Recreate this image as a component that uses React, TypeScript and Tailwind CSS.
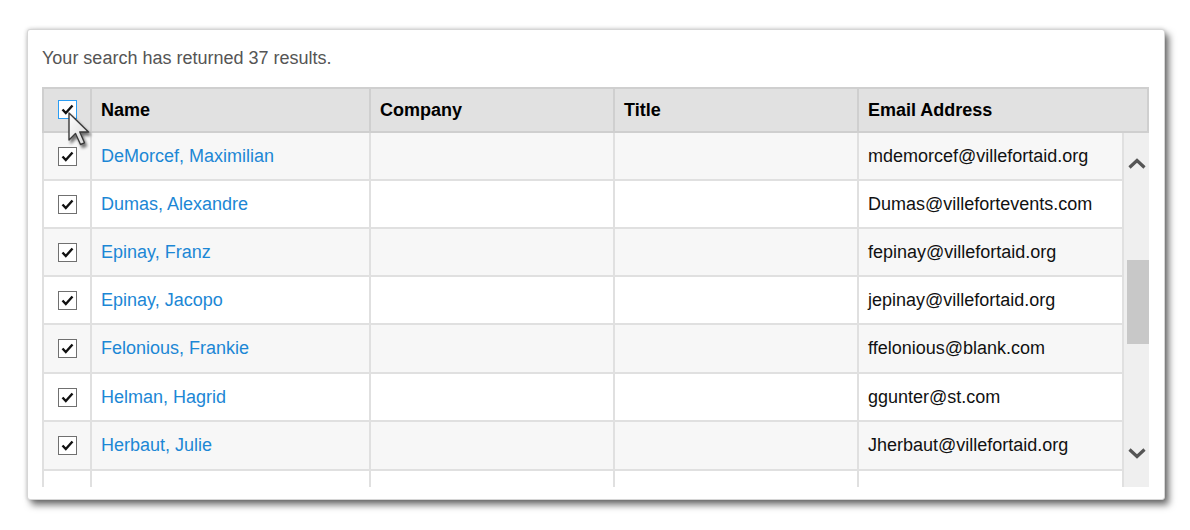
import React from "react";

type Person = { name: string; email: string };

const people: Person[] = [
  { name: "DeMorcef, Maximilian", email: "mdemorcef@villefortaid.org" },
  { name: "Dumas, Alexandre", email: "Dumas@villefortevents.com" },
  { name: "Epinay, Franz", email: "fepinay@villefortaid.org" },
  { name: "Epinay, Jacopo", email: "jepinay@villefortaid.org" },
  { name: "Felonious, Frankie", email: "ffelonious@blank.com" },
  { name: "Helman, Hagrid", email: "ggunter@st.com" },
  { name: "Herbaut, Julie", email: "Jherbaut@villefortaid.org" },
];

function Checkbox({ focused = false }: { focused?: boolean }) {
  return (
    <span
      className={`flex h-[19px] w-[19px] items-center justify-center bg-white border ${
        focused ? "border-[#2a9df4]" : "border-[#707070]"
      }`}
    >
      <svg width="13" height="11" viewBox="0 0 13 11">
        <path d="M1.5 5.5 L4.8 9 L11.5 1.5" fill="none" stroke="#111" strokeWidth="2.4" />
      </svg>
    </span>
  );
}

function Chevron({ up }: { up: boolean }) {
  return (
    <svg width="18" height="11" viewBox="0 0 18 11">
      <path
        d={up ? "M1.5 9.5 L9 2.5 L16.5 9.5" : "M1.5 1.5 L9 8.5 L16.5 1.5"}
        fill="none"
        stroke="#555"
        strokeWidth="3.2"
      />
    </svg>
  );
}

function Cursor() {
  return (
    <svg
      width="30"
      height="42"
      viewBox="0 0 30 42"
      className="pointer-events-none absolute left-[39px] top-[82px]"
    >
      <defs>
        <filter id="cs" x="-30%" y="-30%" width="170%" height="170%">
          <feGaussianBlur in="SourceAlpha" stdDeviation="1.6" />
          <feOffset dx="2" dy="3" />
          <feComponentTransfer>
            <feFuncA type="linear" slope="0.55" />
          </feComponentTransfer>
          <feMerge>
            <feMergeNode />
            <feMergeNode in="SourceGraphic" />
          </feMerge>
        </filter>
        <linearGradient id="cg" x1="0" y1="0" x2="1" y2="1">
          <stop offset="0" stopColor="#ffffff" />
          <stop offset="1" stopColor="#d8d8d8" />
        </linearGradient>
      </defs>
      <path
        d="M2 1 L2 28 L8.5 21.5 L13.5 32.5 L17.5 30.8 L12.8 20 L21.5 20 Z"
        fill="url(#cg)"
        stroke="#3a3a3a"
        strokeWidth="1.4"
        strokeLinejoin="round"
        filter="url(#cs)"
      />
    </svg>
  );
}

export default function App() {
  return (
    <div className="h-[530px] w-[1190px] bg-white pl-[27px] pt-[29px] font-['Liberation_Sans',Arial,sans-serif]">
      <div className="relative h-[471px] w-[1138px] rounded-[3px] border border-[#d6d6d6] bg-white pl-[14px] pt-[18px] shadow-[4px_5px_7px_rgba(0,0,0,0.55),0_0_4px_rgba(0,0,0,0.2)]">
        <p className="mb-[19px] text-[18px] leading-[20px] text-[#555]">
          Your search has returned 37 results.
        </p>

        <div className="w-[1107px]">
          {/* Header */}
          <div className="flex h-[46px] border-2 border-[#cfcfcf] bg-[#e1e1e1] text-[18px] font-bold text-black">
            <div className="flex w-[48px] items-center justify-center border-r-2 border-[#cfcfcf] pb-[2px]">
              <Checkbox focused />
            </div>
            <div className="flex w-[279px] items-center border-r-2 border-[#cfcfcf] pl-[9px]">Name</div>
            <div className="flex w-[244px] items-center border-r-2 border-[#cfcfcf] pl-[9px]">Company</div>
            <div className="flex w-[244px] items-center border-r-2 border-[#cfcfcf] pl-[9px]">Title</div>
            <div className="flex flex-1 items-center pl-[9px]">Email Address</div>
          </div>

          {/* Body */}
          <div className="flex h-[354px] overflow-hidden">
            <div className="w-[1082px] border-l-2 border-[#e0e0e0]">
              {[...people, { name: "", email: "" }].map((p, i) => (
                <div
                  key={i}
                  className={`flex border-b-2 border-[#e0e0e0] text-[18px] ${
                    i === 4 || i === 6 ? "h-[49px]" : "h-[48px]"
                  } ${i % 2 === 0 ? "bg-[#f7f7f7]" : "bg-white"}`}
                >
                  <div className="flex w-[48px] shrink-0 items-center justify-center border-r-2 border-[#e0e0e0] pl-[1px]">
                    {p.name && <Checkbox />}
                  </div>
                  <div className="flex w-[279px] shrink-0 items-center border-r-2 border-[#e0e0e0] pl-[9px] text-[#1c87d5]">
                    {p.name}
                  </div>
                  <div className="w-[244px] shrink-0 border-r-2 border-[#e0e0e0]" />
                  <div className="w-[244px] shrink-0 border-r-2 border-[#e0e0e0]" />
                  <div className="flex flex-1 items-center border-r-2 border-[#e0e0e0] pl-[9px] text-[#111]">
                    {p.email}
                  </div>
                </div>
              ))}
            </div>

            {/* Scrollbar */}
            <div className="flex w-[25px] flex-col items-center bg-[#efefef]">
              <div className="mt-[24px] flex h-[12px] items-center">
                <Chevron up />
              </div>
              <div className="mt-[91px] ml-[2px] h-[84px] w-[22px] bg-[#c8c8c8]" />
              <div className="mt-[103px] flex h-[12px] items-center">
                <Chevron up={false} />
              </div>
            </div>
          </div>
        </div>

        <Cursor />
      </div>
    </div>
  );
}
